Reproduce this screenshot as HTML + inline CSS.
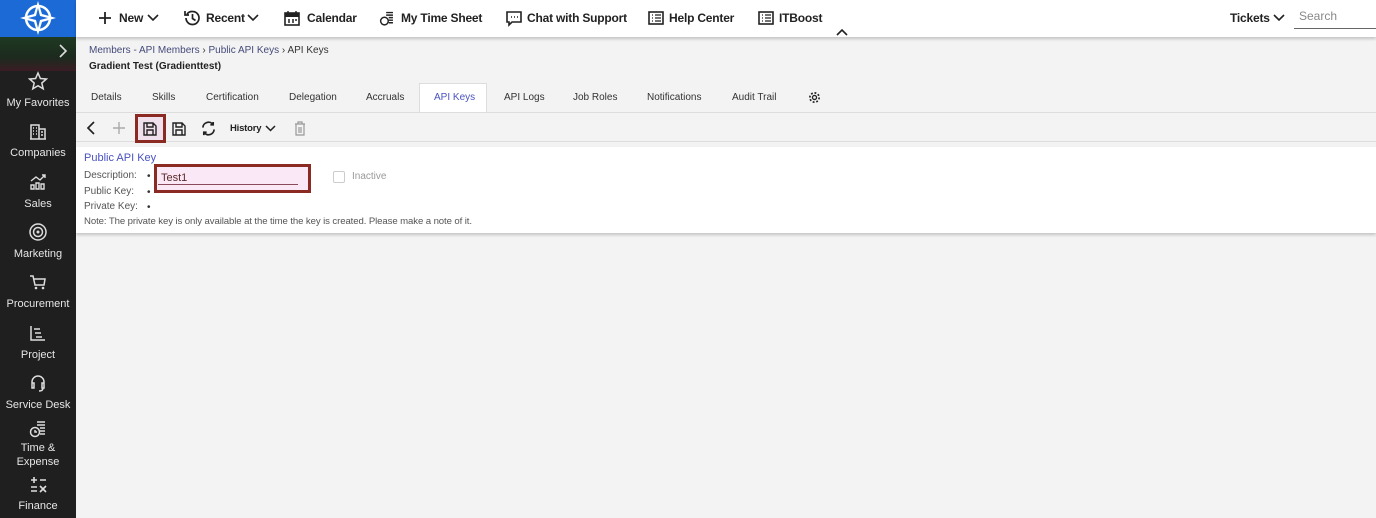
<!DOCTYPE html>
<html><head><style>
*{margin:0;padding:0;box-sizing:border-box}
body{width:1376px;height:518px;overflow:hidden;background:#f3f3f3;font-family:"Liberation Sans",Arial,sans-serif;position:relative;color:#333}
.sb{position:absolute;left:0;top:0;width:76px;height:518px;background:#1f1f1f}
.logo{position:absolute;left:0;top:0;width:76px;height:37px;background:#1b6ad6}
.strip{position:absolute;left:0;top:37px;width:76px;height:34px;background:linear-gradient(#1f3a22,#1c2a1e 60%,#3a1d24)}
.si{position:absolute;left:0;width:76px;text-align:center;color:#e6e6e6;font-size:11px}
.ico{position:absolute;left:28px;width:20px;height:20px}
.top{position:absolute;left:76px;top:0;right:0;height:37px;background:#fff;box-shadow:0 2px 3px rgba(0,0,0,.2)}
.tn{position:absolute;top:11px;font-size:12px;font-weight:bold;color:#222;letter-spacing:-0.2px}
.tab{position:absolute;top:92px;font-size:10px;color:#333}
.lbl{position:absolute;left:84px;font-size:10px;color:#555}
</style></head><body>
<div class="sb">
<div class="logo"><svg width="76" height="37" viewBox="0 0 76 37"><circle cx="38" cy="18" r="12" fill="none" stroke="#fff" stroke-width="2.5"/><path d="M38 1 L42 14 L56 18 L42 22 L38 35 L34 22 L20 18 L34 14Z" fill="#fff"/><path d="M38 8 L40 16 L48 18 L40 20 L38 28 L36 20 L28 18 L36 16Z" fill="#1b6ad6"/></svg></div>
<div class="strip"><svg width="76" height="34"><path d="M60 8 L66 14 L60 20" fill="none" stroke="#ddd" stroke-width="1.6"/></svg></div>
<svg class="ico" style="top:71px" viewBox="0 0 20 20"><path d="M10 2l2.4 5.5 6 .5-4.6 4 1.4 5.8L10 14.7 4.8 17.8 6.2 12 1.6 8l6-.5z" fill="none" stroke="#ddd" stroke-width="1.5"/></svg>
<div class="si" style="top:97px">My Favorites</div>
<svg class="ico" style="top:122px" viewBox="0 0 20 20"><path d="M3 17V3h8v14M11 7h6v10M2 17h16M5 6h1M8 6h1M5 9h1M8 9h1M5 12h1M8 12h1M13 10h2M13 13h2" stroke="#ddd" stroke-width="1.5" fill="none"/></svg>
<div class="si" style="top:147px">Companies</div>
<svg class="ico" style="top:172px" viewBox="0 0 20 20"><path d="M3 17v-4h3v4zM8 17v-6h3v6zM13 17v-5h3v5zM3 9l5-4 4 3 5-5M14 3h3v3" stroke="#ddd" stroke-width="1.4" fill="none"/></svg>
<div class="si" style="top:198px">Sales</div>
<svg class="ico" style="top:222px" viewBox="0 0 20 20"><circle cx="10" cy="10" r="8" stroke="#ddd" stroke-width="1.5" fill="none"/><circle cx="10" cy="10" r="4.5" stroke="#ddd" stroke-width="1.5" fill="none"/><circle cx="10" cy="10" r="1.5" fill="#ddd"/></svg>
<div class="si" style="top:248px">Marketing</div>
<svg class="ico" style="top:272px" viewBox="0 0 20 20"><path d="M2 4h3l2 9h9l1-6H6" stroke="#ddd" stroke-width="1.5" fill="none"/><circle cx="8" cy="16" r="1.3" fill="#ddd"/><circle cx="15" cy="16" r="1.3" fill="#ddd"/></svg>
<div class="si" style="top:298px">Procurement</div>
<svg class="ico" style="top:323px" viewBox="0 0 20 20"><path d="M3 3v14h14M6 6h6M7 10h6M8 14h6" stroke="#ddd" stroke-width="1.5" fill="none"/></svg>
<div class="si" style="top:349px">Project</div>
<svg class="ico" style="top:373px" viewBox="0 0 20 20"><path d="M4 11V9a6 6 0 0112 0v2M4 10h2v5H4zM14 10h2v5h-2zM15 15q0 3-4 3" stroke="#ddd" stroke-width="1.5" fill="none"/></svg>
<div class="si" style="top:399px">Service Desk</div>
<svg class="ico" style="top:419px" viewBox="0 0 20 20"><circle cx="7" cy="13" r="4.5" stroke="#ddd" stroke-width="1.5" fill="none"/><path d="M9 3h8M9 6h8M12 9h5M12 12h5M12 15h5M7 11v2h2" stroke="#ddd" stroke-width="1.5" fill="none"/></svg>
<div class="si" style="top:441px;line-height:14px">Time &amp;<br>Expense</div>
<svg class="ico" style="top:475px" viewBox="0 0 20 20"><path d="M3 5h6M6 2v6M12 5h6M3 12h6M3 16h6M12 11l6 6M18 11l-6 6" stroke="#ddd" stroke-width="1.6" fill="none"/></svg>
<div class="si" style="top:500px">Finance</div>
</div>

<div class="top">
<svg style="position:absolute;left:22px;top:11px" width="14" height="14"><path d="M7 1v12M1 7h12" stroke="#222" stroke-width="1.8"/></svg>
<div class="tn" style="left:43px">New</div><svg style="position:absolute;left:71px;top:14px" width="12" height="8"><path d="M1 1l5 5 5-5" stroke="#222" stroke-width="1.6" fill="none"/></svg>
<svg style="position:absolute;left:107px;top:9px" width="18" height="18" viewBox="0 0 18 18"><path d="M3 9a6.5 6.5 0 106.5-6.5A6.5 6.5 0 004 5M2 2v4h4M9.5 5v4.5l3 2" stroke="#222" stroke-width="1.7" fill="none"/></svg>
<div class="tn" style="left:130px">Recent</div><svg style="position:absolute;left:171px;top:14px" width="12" height="8"><path d="M1 1l5 5 5-5" stroke="#222" stroke-width="1.6" fill="none"/></svg>
<svg style="position:absolute;left:208px;top:10px" width="16" height="16"><rect x="1" y="3" width="14" height="12" fill="none" stroke="#222" stroke-width="1.6"/><rect x="1" y="3" width="14" height="4" fill="#222"/><path d="M4 1v3M12 1v3M4 10h2M8 10h2M11 10h2M4 12h2M8 12h2" stroke="#222" stroke-width="1.4"/></svg>
<div class="tn" style="left:231px">Calendar</div>
<svg style="position:absolute;left:302px;top:10px" width="18" height="17" viewBox="0 0 20 20"><circle cx="7" cy="13" r="4.5" stroke="#222" stroke-width="1.7" fill="none"/><path d="M9 3h8M9 6h8M12 9h5M12 12h5M12 15h5" stroke="#222" stroke-width="1.7"/></svg>
<div class="tn" style="left:325px">My Time Sheet</div>
<svg style="position:absolute;left:430px;top:11px" width="16" height="16"><path d="M1 1h14v10H6l-3 3v-3H1z" fill="none" stroke="#222" stroke-width="1.6"/><path d="M5 6h1M8 6h1M11 6h1" stroke="#222" stroke-width="1.6"/></svg>
<div class="tn" style="left:451px">Chat with Support</div>
<svg style="position:absolute;left:572px;top:11px" width="16" height="14"><rect x="1" y="1" width="14" height="12" fill="none" stroke="#222" stroke-width="1.6"/><path d="M4 4h1M7 4h6M4 7h1M7 7h6M4 10h1M7 10h6" stroke="#222" stroke-width="1.3"/></svg>
<div class="tn" style="left:593px">Help Center</div>
<svg style="position:absolute;left:682px;top:11px" width="16" height="14"><rect x="1" y="1" width="14" height="12" fill="none" stroke="#222" stroke-width="1.6"/><path d="M4 4h1M7 4h6M4 7h1M7 7h6M4 10h1M7 10h6" stroke="#222" stroke-width="1.3"/></svg>
<div class="tn" style="left:703px">ITBoost</div>
<svg style="position:absolute;left:760px;top:29px" width="12" height="7"><path d="M1 6l5-5 5 5" stroke="#222" stroke-width="1.6" fill="none"/></svg>
<div class="tn" style="left:1154px">Tickets</div><svg style="position:absolute;left:1197px;top:14px" width="12" height="8"><path d="M1 1l5 5 5-5" stroke="#222" stroke-width="1.6" fill="none"/></svg>
<div style="position:absolute;left:1218px;top:9px;width:82px;height:20px;border-bottom:1px solid #666;font-size:12px;color:#888;padding-left:5px">Search</div>
</div>

<div style="position:absolute;left:89px;top:45px;font-size:10px;color:#444a7a">Members - API Members <span style="color:#333">›</span> Public API Keys <span style="color:#333">›</span> <span style="color:#333">API Keys</span></div>
<div style="position:absolute;left:89px;top:61px;font-size:10px;font-weight:bold;color:#222">Gradient Test (Gradienttest)</div>

<div style="position:absolute;left:419px;top:83px;width:68px;height:29px;background:#fff;border:1px solid #ddd;border-bottom:none"></div>
<div class="tab" style="left:91px">Details</div>
<div class="tab" style="left:152px">Skills</div>
<div class="tab" style="left:206px">Certification</div>
<div class="tab" style="left:289px">Delegation</div>
<div class="tab" style="left:366px">Accruals</div>
<div class="tab" style="left:434px;color:#4a52c0">API Keys</div>
<div class="tab" style="left:504px">API Logs</div>
<div class="tab" style="left:573px">Job Roles</div>
<div class="tab" style="left:647px">Notifications</div>
<div class="tab" style="left:732px">Audit Trail</div>
<svg style="position:absolute;left:808px;top:91px" width="13" height="13" viewBox="0 0 14 14"><circle cx="7" cy="7" r="2.2" fill="none" stroke="#222" stroke-width="1.4"/><circle cx="7" cy="7" r="5" fill="none" stroke="#222" stroke-width="1.8" stroke-dasharray="2 1.9"/></svg>

<div style="position:absolute;left:76px;top:112px;right:0;height:1px;background:#ddd"></div>
<div style="position:absolute;left:76px;top:141px;right:0;height:1px;background:#ddd"></div>
<svg style="position:absolute;left:86px;top:121px" width="10" height="14"><path d="M8 1L2 7l6 6" stroke="#222" stroke-width="1.7" fill="none"/></svg>
<svg style="position:absolute;left:113px;top:122px" width="12" height="12"><path d="M6 0v12M0 6h12" stroke="#aaa" stroke-width="1.4"/></svg>
<div style="position:absolute;left:135px;top:114px;width:31px;height:29px;border:3px solid #8b2a22;background:#f0e0ec"></div>
<svg style="position:absolute;left:143px;top:122px" width="14" height="14"><path d="M1 1h9l3 3v9H1z M4 1v4h6V1 M4 13V8h6v5" fill="none" stroke="#222" stroke-width="1.4"/></svg>
<svg style="position:absolute;left:172px;top:122px" width="14" height="14"><path d="M1 1h9l3 3v9H1z M4 1v4h6V1 M4 13V8h6v5" fill="none" stroke="#222" stroke-width="1.4"/></svg>
<svg style="position:absolute;left:201px;top:121px" width="15" height="15" viewBox="0 0 16 16"><path d="M2 7a6 6 0 0111-3M14 9a6 6 0 01-11 3M13 1v3h-3M3 15v-3h3" stroke="#222" stroke-width="1.8" fill="none"/></svg>
<div style="position:absolute;left:230px;top:123px;font-size:9.5px;font-weight:bold;color:#222;letter-spacing:-0.2px">History</div>
<svg style="position:absolute;left:265px;top:125px" width="11" height="7"><path d="M1 1l4.5 4.5L10 1" stroke="#222" stroke-width="1.5" fill="none"/></svg>
<svg style="position:absolute;left:294px;top:121px" width="12" height="15"><path d="M1 3h10M4 3V1h4v2M2 3v11h8V3M5 6v6M7 6v6" stroke="#999" stroke-width="1.2" fill="none"/></svg>

<div style="position:absolute;left:76px;top:147px;right:0;height:86px;background:#fff;box-shadow:0 2px 3px rgba(0,0,0,.2)"></div>
<div style="position:absolute;left:84px;top:152px;font-size:11px;color:#4a52c0">Public API Key</div>
<div class="lbl" style="top:170px">Description:</div>
<div class="lbl" style="top:186px">Public Key:</div>
<div class="lbl" style="top:201px">Private Key:</div>
<div style="position:absolute;left:147px;top:171px;font-size:10px">•</div>
<div style="position:absolute;left:147px;top:187px;font-size:10px">•</div>
<div style="position:absolute;left:147px;top:202px;font-size:10px">•</div>
<div style="position:absolute;left:154px;top:164px;width:157px;height:29px;border:3px solid #8b2a22;background:#fbe8f6"></div>
<div style="position:absolute;left:161px;top:172px;font-size:11px;color:#5a2a2a">Test1</div>
<div style="position:absolute;left:158px;top:184px;width:140px;height:1px;background:#8a4a5a"></div>
<div style="position:absolute;left:333px;top:171px;width:12px;height:12px;border:1px solid #ccc;border-radius:2px"></div>
<div style="position:absolute;left:352px;top:171px;font-size:10px;color:#999">Inactive</div>
<div style="position:absolute;left:84px;top:216px;font-size:9.6px;color:#555;letter-spacing:-0.1px">Note: The private key is only available at the time the key is created. Please make a note of it.</div>
</body></html>
